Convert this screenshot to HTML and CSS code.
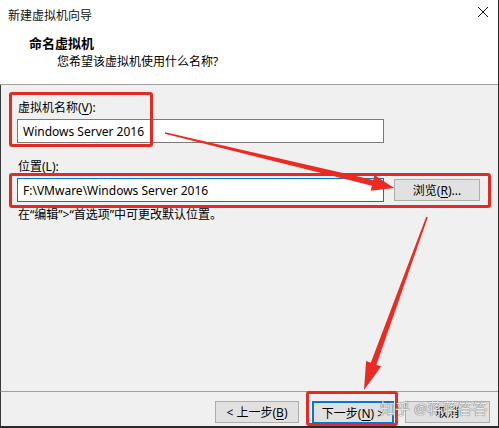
FILE: index.html
```html
<!DOCTYPE html>
<html lang="zh-CN">
<head>
  <meta charset="UTF-8">
  <title>新建虚拟机向导</title>
  <link rel="stylesheet" href="styles.css">
</head>
<body>
  <div class="window">
    <!-- Title bar -->
    <div class="titlebar">
      <span class="title">新建虚拟机向导</span>
      <svg class="close" width="12" height="12" viewBox="0 0 12 12">
        <path d="M1 1 L11 11 M11 1 L1 11" stroke="#111" stroke-width="1" fill="none"/>
      </svg>
    </div>

    <!-- Page header -->
    <div class="header">
      <div class="heading">命名虚拟机</div>
      <div class="subheading">您希望该虚拟机使用什么名称?</div>
    </div>

    <!-- Form -->
    <div class="content">
      <label class="field-label">虚拟机名称(<u>V</u>):</label>
      <div class="field-row">
        <input class="text-input" type="text" value="Windows Server 2016">
      </div>

      <label class="field-label second">位置(<u>L</u>):</label>
      <div class="field-row">
        <input class="text-input focused" type="text" value="F:\VMware\Windows Server 2016">
        <button class="btn browse">浏览(<u>R</u>)...</button>
      </div>

      <div class="hint">在“编辑”&gt;“首选项”中可更改默认位置。</div>
    </div>

    <!-- Buttons -->
    <div class="footer">
      <button class="btn back">&lt; 上一步(<u>B</u>)</button>
      <button class="btn next">下一步(<u>N</u>) &gt;</button>
      <button class="btn cancel">取消</button>
    </div>

    <!-- Annotations -->
    <div class="mark mark-name"></div>
    <div class="mark mark-location"></div>
    <div class="mark mark-next"></div>
    <svg class="arrows" width="499" height="428" viewBox="0 0 499 428">
      <polygon fill="#ec2a22" points="165.2,132.2 373.3,180 374.5,175.1 394,188 370.7,190.7 371.9,185.8 164.8,133.8"/>
      <polygon fill="#ec2a22" points="427.8,217.3 376.4,364.7 381.1,366.4 364,390 366.1,361 370.8,362.7 426.2,216.7"/>
    </svg>
    <div class="watermark">知乎 @蒋蒋答答</div>
  </div>
</body>
</html>
```

FILE: styles.css
```css
body {
  margin: 0;
  font-family: "Noto Sans", "Noto Sans CJK SC", sans-serif;
  font-size: 12px;
  color: #000;
  background: #fff;
}

.window {
  position: relative;
  width: 498px;
  height: 428px;
  display: flex;
  flex-direction: column;
  border-right: 1px solid #2a2a2a;
  background: #fff;
  overflow: hidden;
}

.titlebar {
  height: 30px;
  display: flex;
  justify-content: space-between;
  padding: 0 9px 0 8px;
}

.title {
  margin-top: 8px;
  line-height: 16px;
  color: #111;
}

.close {
  margin-top: 6px;
}

.header {
  height: 54px;
  padding-left: 29px;
  border-bottom: 1px solid #a0a0a0;
}

.heading {
  margin-top: 5px;
  font-size: 13px;
  font-weight: bold;
  line-height: 16px;
}

.subheading {
  margin-top: 3px;
  padding-left: 28px;
  line-height: 16px;
}

.content {
  flex: 1;
  display: flex;
  flex-direction: column;
  padding: 0 17px;
  background: #f0f0f0;
  border-left: 1px solid #3a3a3a;
}

.field-label {
  margin-top: 15px;
  line-height: 16px;
}

.field-label.second {
  margin-top: 16px;
}

.field-label u,
.btn u {
  text-decoration: underline;
  text-underline-offset: 2px;
}

.field-row {
  display: flex;
  align-items: center;
  margin-top: 3px;
}

.text-input {
  width: 367px;
  height: 24px;
  box-sizing: border-box;
  margin: 0 0 0 -1px;
  padding: 0 5px;
  border: 1px solid #7a7a7a;
  background: #fff;
  font-family: "Noto Sans", "Noto Sans CJK SC", sans-serif;
  font-size: 12px;
  color: #000;
  outline: none;
}

.text-input.focused {
  border-color: #0078d7;
}

.btn {
  height: 22px;
  box-sizing: border-box;
  padding: 0;
  border: 1px solid #adadad;
  background: #e1e1e1;
  font-family: "Noto Sans", "Noto Sans CJK SC", sans-serif;
  font-size: 12px;
  color: #000;
}

.browse {
  width: 86px;
  margin-left: 10px;
}

.hint {
  margin-top: 5px;
  line-height: 16px;
}

.footer {
  height: 37px;
  display: flex;
  align-items: flex-start;
  justify-content: flex-end;
  padding: 9px 8px 0 0;
  box-sizing: border-box;
  background: #f0f0f0;
  border-top: 1px solid #a0a0a0;
  border-left: 1px solid #3a3a3a;
  border-bottom: 2px solid #2a2a2a;
}

.back {
  width: 84px;
}

.next {
  width: 82px;
  height: 23px;
  margin-left: 13px;
  border: 2px solid #0078d7;
}

.cancel {
  width: 85px;
  margin-left: 11px;
}

/* red annotation boxes */
.mark {
  position: absolute;
  box-sizing: border-box;
  border: 3px solid #e42a22;
  border-radius: 3px;
}

.mark-name {
  left: 9px;
  top: 92px;
  width: 144px;
  height: 55px;
}

.mark-location {
  left: 9px;
  top: 173px;
  width: 482px;
  height: 35px;
}

.mark-next {
  left: 306px;
  top: 391px;
  width: 92px;
  height: 35px;
}

.arrows {
  position: absolute;
  left: 0;
  top: 0;
  pointer-events: none;
}

/* site watermark over the footer */
.watermark {
  position: absolute;
  left: 380px;
  top: 398px;
  font-size: 15px;
  line-height: 20px;
  color: rgba(255, 255, 255, 0.85);
  text-shadow: 0 0 1px #6a6a6a, 0 0 1px #6a6a6a;
  white-space: nowrap;
  pointer-events: none;
}
```
